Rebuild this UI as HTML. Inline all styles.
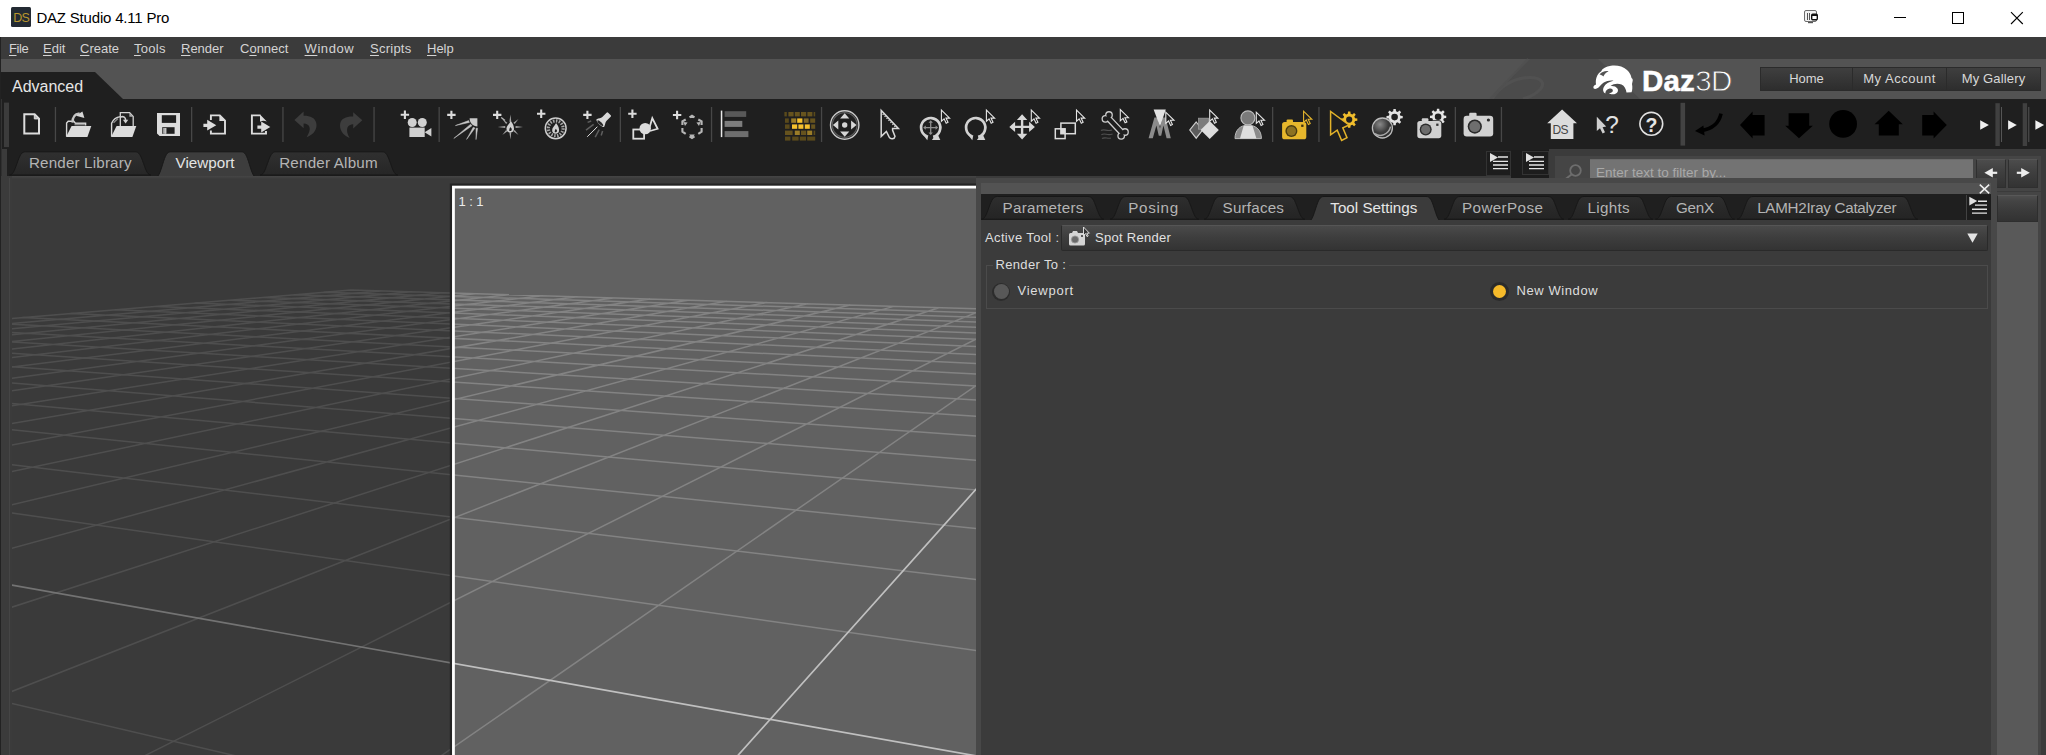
<!DOCTYPE html>
<html lang="en">
<head>
<meta charset="utf-8">
<title>DAZ Studio 4.11 Pro</title>
<style>
*{box-sizing:border-box;margin:0;padding:0}
html,body{width:2046px;height:755px;overflow:hidden;background:#3b3b3b}
body{position:relative;font-family:"Liberation Sans",Arial,sans-serif;font-size:13px;color:#d2d2d2;-webkit-font-smoothing:antialiased}
.abs{position:absolute}
svg{display:block;overflow:visible}
/* title bar */
#title{position:absolute;left:0;top:0;width:2046px;height:37px;background:#fff;color:#000}
#title .name{position:absolute;left:36.4px;top:8.5px;font-size:15px;line-height:18px;white-space:nowrap;letter-spacing:-0.19px}
#appicon{position:absolute;left:11px;top:7px;width:20px;height:20px;background:#232a33;border-radius:1.5px}
/* menu */
#menu{position:absolute;left:0;top:37px;width:2046px;height:22px;background:#3b3b3b}
#menu span{position:absolute;top:4px;font-size:13px;line-height:16px;color:#d4d4d4;white-space:nowrap}
#menu u{text-decoration:underline;text-underline-offset:1.5px;text-decoration-thickness:1px}
/* activity bar */
#act{position:absolute;left:0;top:59px;width:2046px;height:40px;background:#535353}
#advtab{position:absolute;left:1px;top:13px;width:122px;height:27px}
#advtab span{position:absolute;left:11px;top:6px;font-size:16px;line-height:18px;color:#e6e6e6}
.nav{position:absolute;top:8px;height:24px;border:1px solid #2b2b2b;background:linear-gradient(#3f3f3f,#2d2d2d);color:#d8d8d8;font-size:13px;line-height:21px;text-align:center}
/* toolbar */
#tb{position:absolute;left:0;top:99px;width:2046px;height:51px;background:#1f1f1f}
.sep{position:absolute;top:13px;width:1px;height:34px;background:#454545}
.ic{position:absolute}
/* tabs row */
#tabs{position:absolute;left:0;top:150px;width:2046px;height:26px;background:#1f1f1f}
.tab{position:absolute;height:22px}
.tab span{position:absolute;top:4px;font-size:15.2px;line-height:18px;white-space:nowrap;color:#b9b9b9}
/* viewport */
#vpwrap{position:absolute;left:0;top:176px;width:976px;height:579px;background:#3b3b3b}
#vp{position:absolute;left:12px;top:176px;width:964px;height:579px;background:#616161;overflow:hidden}
#vp .grid{position:absolute;left:0;top:0}
#dim{position:absolute;left:0;top:0;width:440px;height:579px;background:rgba(0,0,0,0.40)}
#dim2{position:absolute;left:440px;top:0;width:524px;height:9px;background:rgba(0,0,0,0.40)}
#vptop{position:absolute;left:0;top:0;width:964px;height:3px;background:linear-gradient(rgba(255,255,255,0.06),rgba(255,255,255,0))}
/* floating pane */
#pane{position:absolute;left:976px;top:178px;width:1021px;height:577px;background:#484848}
#pane .hdr{position:absolute;left:5px;top:4.7px;width:1010px;height:11.3px;background:#535353}
#pane .tabbar{position:absolute;left:5px;top:16px;width:1010px;height:26px;background:#1f1f1f}
#pane .body{position:absolute;left:5px;top:42px;width:1010px;height:535px;background:#3b3b3b}
.ptab{position:absolute;top:0;height:26px}
.ptab span{position:absolute;top:4.5px;font-size:15.2px;line-height:18px;white-space:nowrap;color:#b4b4b4}
</style>
</head>
<body>
<!-- ================= TITLE BAR ================= -->
<div id="title">
  <div id="appicon"><svg width="20" height="20" viewBox="0 0 20 20"><text x="2.2" y="14.6" font-family="Liberation Sans,Arial,sans-serif" font-size="12.5" fill="#b8952c" letter-spacing="-0.8">DS</text></svg></div>
  <div class="name">DAZ Studio 4.11 Pro</div>
  <svg class="abs" style="left:1800px;top:0" width="246" height="37" viewBox="1800 0 246 37">
  <rect x="1804.5" y="10.5" width="12" height="11" rx="1.5" fill="#f2f2f2" stroke="#6e6e6e" stroke-width="1"/>
  <path d="M1807.5 13V20M1809.5 13V20" stroke="#555" stroke-width="1"/>
  <rect x="1808" y="22" width="5" height="1.2" fill="#555"/>
  <rect x="1811.7" y="14.2" width="5.6" height="5.6" rx="1" fill="#fff" stroke="#111" stroke-width="1.4"/>
  <rect x="1812" y="14" width="5" height="2" fill="#111"/>
  <path d="M1894 17.5H1906" stroke="#000" stroke-width="1"/>
  <rect x="1952.5" y="12.5" width="11" height="11" fill="none" stroke="#000" stroke-width="1"/>
  <path d="M2011 12.2L2022.8 24M2022.8 12.2L2011 24" stroke="#000" stroke-width="1.1"/>
</svg>

</div>
<!-- ================= MENU BAR ================= -->
<div id="menu">
  <span style="left:9px;letter-spacing:-0.45px"><u>F</u>ile</span>
  <span style="left:43px"><u>E</u>dit</span>
  <span style="left:80px"><u>C</u>reate</span>
  <span style="left:134px;letter-spacing:0.3px"><u>T</u>ools</span>
  <span style="left:181px"><u>R</u>ender</span>
  <span style="left:240px">C<u>o</u>nnect</span>
  <span style="left:304.6px;letter-spacing:0.55px"><u>W</u>indow</span>
  <span style="left:370px;letter-spacing:0.25px"><u>S</u>cripts</span>
  <span style="left:427px"><u>H</u>elp</span>
</div>
<!-- ================= ACTIVITY BAR ================= -->
<div id="act">
  <svg id="advtab" viewBox="0 0 122 27"><path d="M0 0H94L122 27H0Z" fill="#1f1f1f"/></svg>
  <div id="advtab" style="background:none"><span>Advanced</span></div>
  <svg class="abs" style="left:1440px;top:0" width="320" height="40" viewBox="1440 59 320 40">
  <path d="M1530 59H1598L1640 99H1490Z" fill="#4b4b4b"/>
  <path d="M1492 99C1500 86 1514 77.5 1530 77.5C1541 77.5 1545.5 83 1540.5 89C1536.5 93.5 1530 97 1523 99" fill="none" stroke="#515151" stroke-width="3.2"/><path d="M1528 59L1490 99" stroke="#505050" stroke-width="2"/>
  <path d="M1596 84.5C1595.2 79 1597 74 1601 71.5C1602.5 68.5 1606 66.3 1611 65.8C1617 65 1623 66.5 1627 70C1629.5 72.3 1631 75 1631.5 78C1632.5 78.6 1633 79.6 1632.7 80.8L1632 84C1632.6 87 1632.4 90 1631.6 92.3L1626.5 92.6C1626 89 1624.5 86 1621.5 84.6C1618 83 1613.5 83.6 1610.6 86C1613.3 85.6 1616 86.4 1617.4 88.4C1618.6 90.2 1618 92.2 1616 93.4C1613.6 94.8 1610.6 94.6 1609 93.2C1610.8 93.2 1612.4 92.4 1612.8 91C1613.2 89.4 1611.6 88.2 1609.6 88.6C1606.8 89.2 1605 91.4 1605.4 93.6C1603 92.4 1602.4 89.6 1603.8 87C1605.4 84 1609 81.6 1613.6 80.8C1610.4 80.2 1606.6 80.8 1603.8 82.6C1601 84.4 1599.4 87.6 1596.8 88.6C1594.6 89.4 1593.2 88.6 1593.4 87C1593.6 85.8 1594.6 85 1596 84.5Z" fill="#fff"/>
  <path d="M1599.5 74.5C1601.5 72 1605 70.6 1608.6 71.2C1606 72.4 1604.2 74.2 1603.4 76.4C1602.4 75.4 1601 74.8 1599.5 74.5Z" fill="#535353"/>
  <text x="1642" y="90.6" font-family="Liberation Sans,Arial,sans-serif" font-size="29.5" font-weight="bold" fill="#fff" stroke="#fff" stroke-width="0.5" letter-spacing="0.1">Daz</text>
  <text x="1695.3" y="90.6" font-family="Liberation Sans,Arial,sans-serif" font-size="29.5" fill="#fff" letter-spacing="-0.6" stroke="#535353" stroke-width="0.8">3D</text>
</svg>

  <div class="nav" style="left:1760px;width:93px">Home</div>
  <div class="nav" style="left:1852px;width:95px;letter-spacing:0.55px">My Account</div>
  <div class="nav" style="left:1946px;width:95px;letter-spacing:0.15px">My Gallery</div>
</div>
<!-- ================= TOOLBAR ================= -->
<div id="tb">
<svg class="abs" style="left:0;top:0" width="2046" height="51" viewBox="0 99 2046 51" fill="none">
<rect x="0" y="99" width="2" height="51" fill="#333"/>
<rect x="4" y="102.6" width="5" height="44.5" fill="#3c3c3c"/>
<path d="M24.3 114.2H34.6L39 118.6V133.5H24.3Z" stroke="#dcdcdc" stroke-width="2" stroke-linejoin="miter"/><path d="M34.3 114.4V118.9H38.8Z" fill="#bdbdbd" stroke="#dcdcdc" stroke-width="1"/>
<rect x="54.8" y="107" width="1.3" height="35" fill="#474747"/>
<path d="M66.6 136.5V123L68.2 121.3H73.8L75.4 123.2H85.6V125.5" stroke="#d6d6d6" stroke-width="1.4"/><path d="M74.5 124.6H85.0" stroke="#8c8c8c" stroke-width="1.6"/><path d="M66.0 137L71.6 125.9H91.3L87.4 137Z" fill="#dcdcdc"/>
<path d="M72.7 122.6C72.3 117.4 75 114 79.6 113.4" stroke="#c4c4c4" stroke-width="2.3"/><path d="M82.4 111.6L84.4 118L76 115.8Z" fill="#d6d6d6"/>
<path d="M111.6 136.5V123.3C113.0 119.5 116.5 117.2 120.5 116.6" stroke="#d6d6d6" stroke-width="1.4"/><path d="M111.0 137L116.6 125.9H136.3L132.4 137Z" fill="#dcdcdc"/><path d="M120.3 126V112.6H129.6L133.2 116.5V126" stroke="#d2d2d2" stroke-width="1.3"/><path d="M129.4 112.8V116.8H133Z" fill="#aaa"/><path d="M120.6 117C123.5 116 125.6 117.5 125.6 120" stroke="#cfcfcf" stroke-width="1.6"/><path d="M122.9 119.8H128.3L125.6 123.6Z" fill="#cfcfcf"/><path d="M113.5 122.8L118 118.5" stroke="#8a8a8a" stroke-width="1.5"/>
<path d="M157 113.1H180V136.1H159.6L157 133.5Z" fill="#dcdcdc"/><rect x="161.8" y="115.2" width="14.3" height="7.7" fill="#1f1f1f"/><rect x="162.2" y="127.2" width="12.4" height="6.6" fill="#1f1f1f"/><rect x="162.8" y="128" width="3.8" height="5.8" fill="#9a9a9a"/><rect x="164.6" y="128" width="1.2" height="5.8" fill="#cfcfcf"/>
<rect x="191.0" y="107" width="1.3" height="35" fill="#474747"/>
<path d="M210.9 120V115.4H219.8L225 120.6V133.6H210.9V130.4" stroke="#dcdcdc" stroke-width="1.9"/><path d="M219.4 115V121H225.4Z" fill="#dcdcdc"/>
<path d="M203.4 123.7H207.2V119.8L216.3 125.3L207.2 130.6V127H203.4Z" fill="#dcdcdc"/>
<path d="M266 131V133.6H251.9V115.4H260.4" stroke="#dcdcdc" stroke-width="1.9"/><path d="M260 114.5L266.8 121.6C264 120.4 262 120.8 260 121.8Z" fill="#dcdcdc"/>
<path d="M257.4 125.5H261.2V121.6L270.3 127.1L261.2 132.4V128.8H257.4Z" fill="#dcdcdc"/>
<rect x="282.3" y="107" width="1.3" height="35" fill="#474747"/>
<path d="M303.6 111.4L294.4 119.9L303.6 128.2V123.6C309.5 123.6 312.4 128.6 306.6 137.2C314.4 134.4 317.6 128.6 316.2 122.8C314.8 117.6 310.2 115.6 303.6 115.7Z" fill="#3d3d3d"/>
<path d="M353.2 112.2L362.3 120.2L353.2 128.6V124.2C347.6 124.4 344.6 129 349.6 138C342.4 135 339.2 129 340.2 123.4C341.4 118.2 346.4 116.2 353.2 116.4Z" fill="#3d3d3d"/>
<rect x="373.4" y="107" width="1.3" height="35" fill="#474747"/>
<path d="M400.7 114.8H409.1M404.9 110.6V119.0" stroke="#dcdcdc" stroke-width="2.1"/>
<circle cx="412.2" cy="122.5" r="4.5" fill="#d0d0d0"/><circle cx="422.3" cy="122.5" r="4.5" fill="#d0d0d0"/><rect x="409.4" y="127.6" width="15.3" height="9.4" fill="#d0d0d0"/><path d="M424.6 132.3L431.4 127.9V136.6Z" fill="#d0d0d0"/>
<rect x="438.5" y="107" width="1.3" height="35" fill="#474747"/>
<path d="M447.2 114.9H455.6M451.4 110.7V119.1" stroke="#dcdcdc" stroke-width="2.1"/>
<path d="M477.4 118.2V126.4C472.8 126.4 469.6 122.8 469.6 118.2Z" fill="#c9c9c9"/>
<path d="M468.6 120.6L455.4 125.6L469.4 122.4ZM470.6 124.2L453.8 138.4L472 125.8ZM473.2 127.2L466.6 139.4L475 128ZM476 128.2L476 139.6L477.6 128.2Z" fill="#c6c6c6" stroke="#c6c6c6" stroke-width="0.5"/>
<path d="M493.0 114.9H501.4M497.2 110.7V119.1" stroke="#dcdcdc" stroke-width="2.1"/>
<path d="M509.4 132.2L511.3 132.2L510.4 139.6ZM506.1 130.0L507.4 131.3L502.3 135.1ZM505.2 126.0L505.2 128.0L497.8 127.0ZM507.4 122.7L506.1 124.0L502.3 118.9ZM511.3 121.8L509.4 121.8L510.4 114.4ZM514.7 124.0L513.4 122.7L518.5 118.9ZM515.6 128.0L515.6 126.0L523.0 127.0ZM513.4 131.3L514.7 130.0L518.5 135.1Z" fill="#a4a4a4"/>
<path d="M505 120.6L501.2 117.4" stroke="#b8b8b8" stroke-width="1.3"/>
<path transform="translate(510.2 126.8) scale(1.25)" d="M0.4 -4.6C2.6 -2 3.2 0.4 3 2.2C2.8 3.8 1.6 4.6 0 4.6C-1.8 4.6 -3 3.4 -3 1.6C-3 -0.6 -0.8 -2 0.4 -4.6ZM0.2 0.2C-0.6 1.4 -1 2.4 -0.6 3.4C0.6 3.6 1.4 2.8 1.2 1.8C1 1 0.4 0.8 0.2 0.2Z" fill="#d0d0d0" fill-rule="evenodd"/>
<path d="M537.0 113.8H545.4M541.2 109.6V118.0" stroke="#dcdcdc" stroke-width="2.1"/>
<circle cx="555.7" cy="128.3" r="10.4" stroke="#cdcdcd" stroke-width="1.5"/><circle cx="555.7" cy="128.3" r="7.4" stroke="#a6a6a6" stroke-width="3.2" stroke-dasharray="1.5 1.406"/>
<path transform="translate(555.6 128.4) scale(1.15)" d="M0.4 -4.6C2.6 -2 3.2 0.4 3 2.2C2.8 3.8 1.6 4.6 0 4.6C-1.8 4.6 -3 3.4 -3 1.6C-3 -0.6 -0.8 -2 0.4 -4.6ZM0.2 0.2C-0.6 1.4 -1 2.4 -0.6 3.4C0.6 3.6 1.4 2.8 1.2 1.8C1 1 0.4 0.8 0.2 0.2Z" fill="#d0d0d0" fill-rule="evenodd"/>
<path d="M583.2 114.9H591.6M587.4 110.7V119.1" stroke="#dcdcdc" stroke-width="2.1"/>
<g transform="translate(600.4 123) rotate(-45)"><path d="M0 -5.4C2.6 -4.6 3.6 -2.9 5.6 -2.9L11.6 -2.9Q12.8 -2.9 12.8 -1.8L12.8 1.8Q12.8 2.9 11.6 2.9L5.6 2.9C3.6 2.9 2.6 4.6 0 5.4C-2.2 5.4 -2.2 -5.4 0 -5.4Z" fill="#d8d8d8"/><ellipse cx="-0.2" cy="0" rx="1.25" ry="3.9" fill="#262626"/></g>
<path d="M597.2 126.8L587.4 136.6L596 128.2Z" fill="#d4d4d4" stroke="#d4d4d4" stroke-width="0.9"/>
<path d="M593.6 124.4L586 130.2M599.2 129.6L595.2 137.2M602.6 131L601.2 135.4M591.2 121L587.6 122.4" stroke="#5e5e5e" stroke-width="1.5"/>
<rect x="619.7" y="107" width="1.3" height="35" fill="#474747"/>
<path d="M628.2 113.7H636.6M632.4 109.5V117.9" stroke="#dcdcdc" stroke-width="2.1"/>
<rect x="633.3" y="129.5" width="10.8" height="9.2" stroke="#dcdcdc" stroke-width="1.8"/><path d="M648.6 130.4L652.3 118.2L657.6 128.8L650 131" stroke="#dcdcdc" stroke-width="1.8"/><circle cx="645.2" cy="128.6" r="5.7" fill="#dcdcdc"/>
<path d="M672.9 115.0H681.3M677.1 110.8V119.2" stroke="#dcdcdc" stroke-width="2.1"/>
<path d="M689.5 117.3L692.0 115.8L694.5 117.3M698.3 119.5L701.6 121.4L701.6 124.9M701.6 128.1L701.6 131.6L698.3 133.8M694.5 136.3L692.0 138.0L689.5 136.3M685.7 133.8L682.4 131.6L682.4 128.1M682.4 124.9L682.4 121.4L685.7 119.5" stroke="#b6b6b6" stroke-width="2.1" stroke-linejoin="miter"/>
<path d="M692 138.6L689.2 134.6H694.8ZM683.4 122L687.6 122.6L685 126ZM700.6 122L696.4 122.6L699 126Z" fill="#b6b6b6"/>
<rect x="710.9" y="107" width="1.3" height="35" fill="#474747"/>
<rect x="720.8" y="110.6" width="1.5" height="26.5" fill="#e8e8e8"/><rect x="724.6" y="111.2" width="21.6" height="5.7" fill="#595959"/><rect x="724.6" y="120.9" width="17.7" height="6" fill="#7d7d7d"/><rect x="724.6" y="131.1" width="23.8" height="6" fill="#6e6e6e"/>
<rect x="784.4" y="112.0" width="2.4" height="4.4" fill="#5a4a1b"/><rect x="788.4" y="112.0" width="5.2" height="4.4" fill="#66531e"/><rect x="794.8" y="112.0" width="5.0" height="4.4" fill="#66531e"/><rect x="801.0" y="112.0" width="5.2" height="4.4" fill="#66531e"/><rect x="807.4" y="112.0" width="5.0" height="4.4" fill="#66531e"/><rect x="813.6" y="112.0" width="1.6" height="4.4" fill="#5a4a1b"/><rect x="785.0" y="118.4" width="3.8" height="4.4" fill="#5a4a1b"/><rect x="791.2" y="118.4" width="5.0" height="4.4" fill="#9a7c28"/><rect x="797.2" y="118.4" width="5.2" height="4.4" fill="#f6c12d"/><rect x="803.8" y="118.4" width="4.8" height="4.4" fill="#806827"/><rect x="810.2" y="118.4" width="5.0" height="4.4" fill="#66531e"/><rect x="785.0" y="124.4" width="4.6" height="4.4" fill="#5a4a1b"/><rect x="792.0" y="124.4" width="5.2" height="4.4" fill="#f6c12d"/><rect x="798.4" y="124.4" width="5.0" height="4.4" fill="#f6c12d"/><rect x="804.8" y="124.4" width="5.0" height="4.4" fill="#f6c12d"/><rect x="811.2" y="124.4" width="4.0" height="4.4" fill="#66531e"/><rect x="785.0" y="130.6" width="7.6" height="4.4" fill="#66531e"/><rect x="794.8" y="130.6" width="5.0" height="4.4" fill="#9a7c28"/><rect x="801.0" y="130.6" width="5.2" height="4.4" fill="#66531e"/><rect x="807.2" y="130.6" width="5.0" height="4.4" fill="#9a7c28"/><rect x="813.6" y="130.6" width="1.6" height="4.4" fill="#5a4a1b"/><rect x="785.0" y="136.6" width="5.4" height="4.0" fill="#5a4a1b"/><rect x="792.2" y="136.6" width="6.4" height="4.0" fill="#5a4a1b"/><rect x="799.8" y="136.6" width="6.2" height="4.0" fill="#5a4a1b"/><rect x="807.2" y="136.6" width="8.0" height="4.0" fill="#5a4a1b"/>
<rect x="820.9" y="107" width="1.3" height="35" fill="#474747"/>
<circle cx="844.7" cy="125.0" r="14.2" stroke="#c8c8c8" stroke-width="1.4"/><circle cx="844.7" cy="125.0" r="12.4" stroke="#5a5a5a" stroke-width="1.2"/>
<path d="M844.7 113.2l-4.6 5.4h9.2ZM844.7 136.8l-4.6 -5.4h9.2ZM832.9 125.0l5.4 -4.6v9.2ZM856.5 125.0l-5.4 -4.6v9.2Z" fill="#d6d6d6"/><circle cx="844.7" cy="125.0" r="2.7" fill="#d6d6d6"/>
<path d="M881.2 110.4V136.4L886.4 131.4L889.2 137.2C890.6 139.6 894.6 139.2 895 136.4L892.6 130.4V128.6H898.4Z" stroke="#d8d8d8" stroke-width="1.5" stroke-linejoin="miter"/>
<path d="M882.6 113.8L895.4 127" stroke="#d8d8d8" stroke-width="1.2" stroke-dasharray="1.4 1.4"/>
<path d="M926.64 136.30A9.60 9.60 0 1 1 933.18 136.87" stroke="#d2d2d2" stroke-width="2.7"/><path d="M931.9 140.0L940.3 140.0L937.1 133.0Z" fill="#d2d2d2"/><path d="M923.1 134.8L927.3 140.2L928.3 135.2Z" fill="#d2d2d2"/>
<path d="M924.6 127.6H936.8M930.7 121.6V133.6" stroke="#8e8e8e" stroke-width="1.3"/><path d="M923.2 127.6l2.6 -2.2v4.4ZM938.2 127.6l-2.6 -2.2v4.4ZM930.7 120.2l-2.2 2.6h4.4ZM930.7 135l-2.2 -2.6h4.4Z" fill="#8e8e8e"/>
<path transform="translate(941.4 110.0) scale(1.00)" d="M0 0V11.2L2.7 8.8L4.8 13.2L6.6 12.3L4.6 8.1H8.2Z" fill="#1f1f1f" stroke="#e6e6e6" stroke-width="1.1" stroke-linejoin="miter"/>
<path d="M971.64 136.30A9.60 9.60 0 1 1 978.18 136.87" stroke="#d2d2d2" stroke-width="2.7"/><path d="M976.9 140.0L985.3 140.0L982.1 133.0Z" fill="#d2d2d2"/><path d="M968.1 134.8L972.3 140.2L973.3 135.2Z" fill="#d2d2d2"/>
<path transform="translate(986.4 110.0) scale(1.00)" d="M0 0V11.2L2.7 8.8L4.8 13.2L6.6 12.3L4.6 8.1H8.2Z" fill="#1f1f1f" stroke="#e6e6e6" stroke-width="1.1" stroke-linejoin="miter"/>
<path d="M1013.1 126.9H1031.1M1022.1 117.9V135.9" stroke="#d8d8d8" stroke-width="2.4"/>
<path d="M1009.3 126.9l5.8 -5.2v10.4ZM1034.9 126.9l-5.8 -5.2v10.4ZM1022.1 114.3l-5.2 5.8h10.4ZM1022.1 139.5l-5.2 -5.8h10.4Z" fill="#d8d8d8"/>
<path transform="translate(1031.3 110.0) scale(1.00)" d="M0 0V11.2L2.7 8.8L4.8 13.2L6.6 12.3L4.6 8.1H8.2Z" fill="#1f1f1f" stroke="#e6e6e6" stroke-width="1.1" stroke-linejoin="miter"/>
<rect x="1060.9" y="123.1" width="14.4" height="10.6" stroke="#dcdcdc" stroke-width="1.5"/><rect x="1055.3" y="128.8" width="9.8" height="9.8" stroke="#dcdcdc" stroke-width="1.5"/><rect x="1060.9" y="128.8" width="4.4" height="4.9" fill="#dcdcdc"/>
<path transform="translate(1076.5 110.0) scale(1.00)" d="M0 0V11.2L2.7 8.8L4.8 13.2L6.6 12.3L4.6 8.1H8.2Z" fill="#1f1f1f" stroke="#e6e6e6" stroke-width="1.1" stroke-linejoin="miter"/>
<path d="M1108.6 118.4L1121.8 132.4" stroke="#cdcdcd" stroke-width="6.6" stroke-linecap="round"/><circle cx="1105.4" cy="118.8" r="3.9" fill="#cdcdcd"/><circle cx="1109.0" cy="115.0" r="3.9" fill="#cdcdcd"/><circle cx="1121.2" cy="135.8" r="3.9" fill="#cdcdcd"/><circle cx="1125.0" cy="132.0" r="3.9" fill="#cdcdcd"/>
<path d="M1108.6 118.4L1121.8 132.4" stroke="#1f1f1f" stroke-width="4" stroke-linecap="round"/><circle cx="1105.4" cy="118.8" r="2.6" fill="#1f1f1f"/><circle cx="1109.0" cy="115.0" r="2.6" fill="#1f1f1f"/><circle cx="1121.2" cy="135.8" r="2.6" fill="#1f1f1f"/><circle cx="1125.0" cy="132.0" r="2.6" fill="#1f1f1f"/>
<path d="M1101 130.6C1104.4 128 1106.4 132 1112 130M1101.4 134.8C1104.8 132.4 1107 136 1112.6 134M1102 138.6C1105.2 136.4 1107.4 139.2 1111 138" stroke="#505050" stroke-width="1.2"/>
<path transform="translate(1120.3 109.6) scale(1.00)" d="M0 0V11.2L2.7 8.8L4.8 13.2L6.6 12.3L4.6 8.1H8.2Z" fill="#1f1f1f" stroke="#e6e6e6" stroke-width="1.1" stroke-linejoin="miter"/>
<path d="M1148.6 138.2L1154.4 117.6H1157.6L1160 128.6L1162.4 117.6H1165.6L1170.8 138.2H1166.6L1163.4 125.6L1161.2 135.8H1158.8L1156.4 125.6L1152.8 138.2Z" fill="#8c8c8c"/><path d="M1153.6 109.6H1165.8L1160 126.4Z" fill="#e2e2e2"/>
<path transform="translate(1165.8 112.2) scale(1.00)" d="M0 0V11.2L2.7 8.8L4.8 13.2L6.6 12.3L4.6 8.1H8.2Z" fill="#1f1f1f" stroke="#e6e6e6" stroke-width="1.1" stroke-linejoin="miter"/>
<path d="M1196.2 122L1202.6 130L1196.2 138.2L1189.8 130Z" fill="#5c5c5c" stroke="#cfcfcf" stroke-width="1.2"/><rect x="1198.6" y="118.2" width="10" height="11" fill="#7c7c7c" stroke="#9a9a9a" stroke-width="0.8"/><path d="M1209.7 121L1218.8 130L1209.7 139L1200.6 130Z" fill="#dcdcdc"/>
<path transform="translate(1209.7 110.0) scale(1.00)" d="M0 0V11.2L2.7 8.8L4.8 13.2L6.6 12.3L4.6 8.1H8.2Z" fill="#1f1f1f" stroke="#e6e6e6" stroke-width="1.1" stroke-linejoin="miter"/>
<path d="M1235 138.6C1235 130.6 1239.6 125.2 1248 125.2C1256.6 125.2 1261.4 130.6 1261.4 138.6Z" fill="#8a8a8a" stroke="#bdbdbd" stroke-width="1"/><path d="M1243.6 126L1252.6 126L1256.4 138.4H1240Z" fill="#dedede"/><circle cx="1247.9" cy="117.9" r="7" fill="#7a7a7a" stroke="#bdbdbd" stroke-width="1.1"/>
<path transform="translate(1256.3 112.2) scale(1.00)" d="M0 0V11.2L2.7 8.8L4.8 13.2L6.6 12.3L4.6 8.1H8.2Z" fill="#1f1f1f" stroke="#e6e6e6" stroke-width="1.1" stroke-linejoin="miter"/>
<rect x="1272.0" y="107" width="1.3" height="35" fill="#474747"/>
<rect x="1282.1" y="121.9" width="24.2" height="17.4" rx="2.6" fill="#e7b72c"/><rect x="1286.6" y="119.4" width="6.4" height="4" rx="1" fill="#e7b72c"/><circle cx="1291.4" cy="131.1" r="6" fill="#4a3c10"/><circle cx="1291.4" cy="131.1" r="4.6" fill="#8c7122"/><rect x="1301.2" y="124.6" width="2.3" height="2.3" fill="#3a3010"/>
<path transform="translate(1303.6 111.2) scale(1.00)" d="M0 0V11.2L2.7 8.8L4.8 13.2L6.6 12.3L4.6 8.1H8.2Z" fill="#1f1f1f" stroke="#e7b72c" stroke-width="1.1" stroke-linejoin="miter"/>
<rect x="1318.3" y="107" width="1.3" height="35" fill="#474747"/>
<path d="M1355.03 118.20L1357.32 118.44L1357.32 120.76L1355.03 121.00L1354.32 122.73L1355.76 124.52L1354.12 126.16L1352.33 124.72L1350.60 125.43L1350.36 127.72L1348.04 127.72L1347.80 125.43L1346.07 124.72L1344.28 126.16L1342.64 124.52L1344.08 122.73L1343.37 121.00L1341.08 120.76L1341.08 118.44L1343.37 118.20L1344.08 116.47L1342.64 114.68L1344.28 113.04L1346.07 114.48L1347.80 113.77L1348.04 111.48L1350.36 111.48L1350.60 113.77L1352.33 114.48L1354.12 113.04L1355.76 114.68L1354.32 116.47ZM1346.10 119.60A3.10 3.10 0 1 0 1352.30 119.60A3.10 3.10 0 1 0 1346.10 119.60Z" fill="#f0bd2c" fill-rule="evenodd"/>
<path d="M1330.6 111.4V134.8L1337.2 130.2L1341.6 140.4L1347 137.6L1342.8 127.8L1349 125Z" stroke="#e2b22a" stroke-width="1.5" fill="#1f1f1f" stroke-linejoin="miter"/>
<path d="M1400.43 115.70L1402.72 115.94L1402.72 118.26L1400.43 118.50L1399.72 120.23L1401.16 122.02L1399.52 123.66L1397.73 122.22L1396.00 122.93L1395.76 125.22L1393.44 125.22L1393.20 122.93L1391.47 122.22L1389.68 123.66L1388.04 122.02L1389.48 120.23L1388.77 118.50L1386.48 118.26L1386.48 115.94L1388.77 115.70L1389.48 113.97L1388.04 112.18L1389.68 110.54L1391.47 111.98L1393.20 111.27L1393.44 108.98L1395.76 108.98L1396.00 111.27L1397.73 111.98L1399.52 110.54L1401.16 112.18L1399.72 113.97ZM1391.30 117.10A3.30 3.30 0 1 0 1397.90 117.10A3.30 3.30 0 1 0 1391.30 117.10Z" fill="#e2e2e2" fill-rule="evenodd"/>
<defs><radialGradient id="ball" cx="0.38" cy="0.32" r="0.75"><stop offset="0" stop-color="#8a8a8a"/><stop offset="0.55" stop-color="#3c3c3c"/><stop offset="1" stop-color="#2a2a2a"/></radialGradient></defs>
<circle cx="1382.4" cy="128" r="10" fill="url(#ball)" stroke="#bdbdbd" stroke-width="1.3"/><path d="M1375 133.6C1380 137.6 1388.6 134.6 1390.6 126.6" stroke="#a8a8a8" stroke-width="1.5"/>
<path d="M1443.93 115.40L1446.22 115.64L1446.22 117.96L1443.93 118.20L1443.22 119.93L1444.66 121.72L1443.02 123.36L1441.23 121.92L1439.50 122.63L1439.26 124.92L1436.94 124.92L1436.70 122.63L1434.97 121.92L1433.18 123.36L1431.54 121.72L1432.98 119.93L1432.27 118.20L1429.98 117.96L1429.98 115.64L1432.27 115.40L1432.98 113.67L1431.54 111.88L1433.18 110.24L1434.97 111.68L1436.70 110.97L1436.94 108.68L1439.26 108.68L1439.50 110.97L1441.23 111.68L1443.02 110.24L1444.66 111.88L1443.22 113.67ZM1434.80 116.80A3.30 3.30 0 1 0 1441.40 116.80A3.30 3.30 0 1 0 1434.80 116.80Z" fill="#e4e4e4" fill-rule="evenodd"/>
<rect x="1416.6" y="120.2" width="25.4" height="18.6" rx="3" fill="#1f1f1f"/><rect x="1417.3" y="120.9" width="24" height="17.3" rx="2.6" fill="#d0d0d0"/><rect x="1421.8" y="118.2" width="6.6" height="4" rx="1" fill="#d0d0d0"/><circle cx="1425.7" cy="129.6" r="6" fill="#2c2c2c"/><circle cx="1425.7" cy="129.6" r="4.6" fill="#6c6c6c"/><rect x="1436.2" y="123.6" width="2.3" height="2.3" fill="#333"/>
<rect x="1454.7" y="107" width="1.3" height="35" fill="#474747"/>
<rect x="1463.6" y="115.7" width="29.6" height="20.8" rx="3.2" fill="#d2d2d2"/><rect x="1469.2" y="112.8" width="7.4" height="4.4" rx="1.2" fill="#d2d2d2"/><circle cx="1474.8" cy="126.6" r="7.1" fill="#2a2a2a"/><circle cx="1474.8" cy="126.6" r="5.5" fill="#6e6e6e"/><circle cx="1488.4" cy="120" r="1.6" fill="#2a2a2a"/>
<rect x="1500.8" y="107" width="1.3" height="35" fill="#474747"/>
<path d="M1562.1 109.6L1577 123.2H1573.4V138.9H1550.8V123.2H1547.2Z" fill="#dcdcdc"/>
<text x="1552.4" y="133.8" font-family="Liberation Sans,Arial,sans-serif" font-size="12" fill="#454545" letter-spacing="-0.6">DS</text>
<path d="M1596.8 116.8V131L1600 128.2L1602.6 133.4L1605 132.2L1602.6 127.2L1606.2 126.6Z" fill="#cfcfcf"/>
<text x="1605.2" y="133.2" font-family="Liberation Sans,Arial,sans-serif" font-size="24.5" fill="#e2e2e2">?</text>
<circle cx="1651.3" cy="123.8" r="11.4" stroke="#e2e2e2" stroke-width="1.6"/><text x="1645.4" y="131.9" font-family="Liberation Sans,Arial,sans-serif" font-size="19.5" font-weight="bold" fill="#e6e6e6">?</text>
<rect x="1680.5" y="102.8" width="4.6" height="42.8" fill="#434343"/>
<path d="M1721 113.6C1719 123 1712 129 1701 130.6" stroke="#000" stroke-width="3.6"/><path d="M1695 131L1703.4 125.4L1704.6 135.4Z" fill="#000"/>
<path d="M1740 125L1752.6 111.4V115H1764.6V135.4H1752.6V138.6Z" fill="#000"/>
<path d="M1788.6 113.2H1809.2V125.8H1812.8L1799 138.2L1785.2 125.8H1788.6Z" fill="#000"/>
<circle cx="1843.1" cy="123.9" r="13.9" fill="#000"/>
<path d="M1888.7 110.8L1902.8 124.2H1898.8V135.4H1878.8V124.2H1874.6Z" fill="#000"/>
<path d="M1922.2 115H1933.6V111.4L1946.8 125L1933.6 138.6V135.4H1922.2Z" fill="#000"/>
<path d="M1980.2 120.3L1988.9 125L1980.2 129.8Z" fill="#f0f0f0"/>
<path d="M2008.1 120.3L2016.8 125L2008.1 129.8Z" fill="#f0f0f0"/>
<path d="M2035.4 120.3L2044.1 125L2035.4 129.8Z" fill="#f0f0f0"/>
<rect x="1995.4" y="103.2" width="4.4" height="42.8" fill="#404040"/><rect x="2001.0" y="107" width="1" height="35" fill="#555"/>
<rect x="2022.7" y="103.2" width="4.4" height="42.8" fill="#404040"/><rect x="2028.3" y="107" width="1" height="35" fill="#555"/>
</svg>
</div>
<!-- ================= TABS ROW ================= -->
<div id="tabs">
<div class="abs" style="left:0;top:-1px;width:7px;height:28px;background:#3b3b3b"></div>
<div class="abs" style="left:0;top:-1px;width:1.5px;height:28px;background:#303030"></div>
<svg class="abs" style="left:0;top:0" width="2046" height="27" viewBox="0 0 2046 27"><defs><linearGradient id="tg" x1="0" y1="0" x2="0" y2="1"><stop offset="0" stop-color="#303030"/><stop offset="1" stop-color="#262626"/></linearGradient></defs><path d="M9.5 25.0 C12.5 25.0 14.0 22.0 17.0 13.4 S21.5 1.8 25.5 1.8 H135.0 C139.0 1.8 140.5 4.8 143.5 13.4 S148.0 25.0 151.0 25.0 Z" fill="url(#tg)" stroke="#171717" stroke-width="1"/><path d="M155.0 27.5 C158.0 27.5 159.5 24.5 162.5 14.7 S167.0 1.8 171.0 1.8 H241.0 C245.0 1.8 246.5 4.8 249.5 14.7 S254.0 27.5 257.0 27.5 Z" fill="#3d3d3d" stroke="#181818" stroke-width="1"/><path d="M260.0 25.0 C263.0 25.0 264.5 22.0 267.5 13.4 S272.0 1.8 276.0 1.8 H382.0 C386.0 1.8 387.5 4.8 390.5 13.4 S395.0 25.0 398.0 25.0 Z" fill="url(#tg)" stroke="#171717" stroke-width="1"/></svg><div class="tab" style="left:28.9px;top:0"><span style="color:#b4b4b4;letter-spacing:0.17px">Render Library</span></div><div class="tab" style="left:175.6px;top:0"><span style="color:#e4e4e4;letter-spacing:0.00px">Viewport</span></div><div class="tab" style="left:279.2px;top:0"><span style="color:#b4b4b4;letter-spacing:0.20px">Render Album</span></div>
<div class="abs" style="left:1511px;top:0;width:38px;height:28px;background:#1c1c1c"></div>
<div class="abs" style="left:1486px;top:0.5px;width:25px;height:25.5px;background:#1d1d1d;border:1px solid #333"></div>
<div class="abs" style="left:1522px;top:0.5px;width:26.5px;height:24px;background:#1d1d1d;border:1px solid #333"></div>
<svg class="abs" style="left:1489px;top:2px" width="22" height="20" viewBox="0 0 22 20"><path d="M1 1L9 5.5L1 10Z" fill="#e0e0e0"/><path d="M9 5H19M4 9.3H19M4 13H19M4 16.7H19" stroke="#e4e4e4" stroke-width="1.3"/></svg>
<svg class="abs" style="left:1525px;top:2px" width="22" height="20" viewBox="0 0 22 20"><path d="M1 1L9 5.5L1 10Z" fill="#e0e0e0"/><path d="M9 5H19M4 9.3H19M4 13H19M4 16.7H19" stroke="#e4e4e4" stroke-width="1.3"/></svg>

</div>
<!-- ================= VIEWPORT ================= -->
<div id="vpwrap"><div class="abs" style="left:9px;top:2px;width:1px;height:577px;background:#454545"></div></div>
<div id="vp">
<svg class="grid" width="964" height="580" viewBox="0 0 964 580"><path d="M241.4 584.0L-2.0 527.0M966.0 474.7L-2.0 336.8M423.0 584.0L966.0 208.3M966.0 403.7L-2.0 288.4M124.2 584.0L966.0 162.2M966.0 352.7L-2.0 253.6M-2.0 516.2L966.0 136.0M966.0 314.3L-2.0 227.4M-2.0 431.8L926.9 131.7M966.0 284.3L-2.0 206.9M-2.0 372.8L881.9 130.4M966.0 260.2L-2.0 190.5M-2.0 329.3L838.2 129.1M966.0 240.5L-2.0 177.1M-2.0 295.9L795.9 127.8M966.0 224.0L-2.0 165.8M-2.0 269.4L754.7 126.5M966.0 210.1L-2.0 156.3M-2.0 247.9L714.7 125.3M966.0 198.1L-2.0 148.1M-2.0 230.1L675.8 124.2M966.0 187.7L10.3 141.6M-2.0 215.1L638.0 123.0M966.0 178.6L58.6 137.6M-2.0 202.4L601.2 121.9M966.0 170.5L103.2 133.8M-2.0 191.3L565.3 120.8M966.0 163.4L144.5 130.4M-2.0 181.7L530.5 119.8M966.0 157.0L182.7 127.1M-2.0 173.2L496.5 118.8M966.0 151.2L218.4 124.2M-2.0 165.7L463.4 117.8M966.0 146.0L251.6 121.4M-2.0 159.0L431.2 116.8M966.0 141.2L282.7 118.7M-2.0 153.0L399.7 115.8M966.0 136.9L311.8 116.3M-2.0 147.6L369.1 114.9M966.0 132.9L339.1 114.0M-2.0 142.7L339.1 114.0" stroke="#838383" stroke-width="1.5" fill="none"/><path d="M966.0 580.2L-2.0 408.8M721.8 584.0L966.0 311.1" stroke="#c0c0c0" stroke-width="1.7" fill="none"/></svg>
<div id="dim"></div><div id="dim2"></div><div id="vptop"></div>
<svg class="abs" style="left:0;top:0" width="964" height="579" viewBox="12 176 964 579"><path d="M451 760V184.6H980" fill="none" stroke="#232323" stroke-width="2.4"/><path d="M453.45 760V187.15H980" fill="none" stroke="#fff" stroke-width="2.8"/></svg>
<div class="abs" style="left:446.5px;top:18.5px;font-size:13px;line-height:14px;color:#ececec;white-space:nowrap;letter-spacing:-0.1px">1 : 1</div>

</div>
<div class="abs" style="left:0;top:37px;width:1px;height:718px;background:#222;z-index:5"></div>
<!-- ================= RIGHT COLUMN ================= -->
<div class="abs" style="left:1549px;top:149px;width:497px;height:46px;background:#3b3b3b"></div>
<div class="abs" style="left:1555px;top:156px;width:486px;height:35px;background:#454545"></div>
<div class="abs" style="left:1590px;top:159px;width:383px;height:29px;background:#737373;border-top:1px solid #6a6a6a"></div>
<div class="abs" style="left:1596px;top:165px;font-size:13.5px;line-height:16px;color:#a9a9a9;white-space:nowrap">Enter text to filter by...</div>
<svg class="abs" style="left:1563px;top:163px" width="22" height="18" viewBox="0 0 22 18"><circle cx="12.5" cy="7.5" r="5.3" fill="none" stroke="#6d6d6d" stroke-width="1.8"/><path d="M8.5 11.5L2 16.5" stroke="#6d6d6d" stroke-width="2"/></svg>
<div class="abs" style="left:1976px;top:158.6px;width:30px;height:29.4px;background:linear-gradient(#4c4c4c,#404040 40%,#333);border:1px solid #2f2f2f;border-top-color:#555"></div>
<div class="abs" style="left:2008.3px;top:158.6px;width:30px;height:29.4px;background:linear-gradient(#4c4c4c,#404040 40%,#333);border:1px solid #2f2f2f;border-top-color:#555"></div>
<svg class="abs" style="left:1982px;top:166px" width="18" height="14" viewBox="0 0 18 14"><path d="M2.4 6.8L10.8 2V11.6Z" fill="#ededed"/><path d="M10 6.8H15.2" stroke="#ededed" stroke-width="2.2"/></svg>
<svg class="abs" style="left:2014px;top:166px" width="18" height="14" viewBox="0 0 18 14"><path d="M15.8 6.8L7.2 2V11.6Z" fill="#ededed"/><path d="M2.8 6.8H8" stroke="#ededed" stroke-width="2.2"/></svg>
<div class="abs" style="left:1996px;top:192px;width:45px;height:563px;background:#454545"></div>
<div class="abs" style="left:1997px;top:195px;width:41px;height:560px;background:#595959"></div>
<div class="abs" style="left:1997px;top:195px;width:41px;height:26.5px;background:linear-gradient(#4e4e4e,#444 20%,#3a3a3a 60%,#323232);border:1px solid #2e2e2e;border-top-color:#585858"></div>
<div class="abs" style="left:2041px;top:149px;width:5px;height:606px;background:#3b3b3b"></div>

<!-- ================= FLOATING PANE ================= -->
<div id="pane">
<div class="hdr"></div>
<svg class="abs" style="left:1003px;top:5.5px" width="11" height="10" viewBox="0 0 11 10"><path d="M0.8 0.6L10.2 9.4M10.2 0.6L0.8 9.4" stroke="#f0f0f0" stroke-width="1.5"/></svg>
<div class="tabbar">
<svg class="abs" style="left:0;top:0" width="1010" height="27" viewBox="0 0 1010 27"><defs><linearGradient id="tg2" x1="0" y1="0" x2="0" y2="1"><stop offset="0" stop-color="#2e2e2e"/><stop offset="1" stop-color="#242424"/></linearGradient></defs><path d="M0.3 25.2 C3.3 25.2 4.8 22.2 7.8 13.8 S12.3 2.5 16.3 2.5 H107.0 C111.0 2.5 112.5 5.5 115.5 13.8 S120.0 25.2 123.0 25.2 Z" fill="url(#tg2)" stroke="#171717" stroke-width="1"/><path d="M129.0 25.2 C132.0 25.2 133.5 22.2 136.5 13.8 S141.0 2.5 145.0 2.5 H202.0 C206.0 2.5 207.5 5.5 210.5 13.8 S215.0 25.2 218.0 25.2 Z" fill="url(#tg2)" stroke="#171717" stroke-width="1"/><path d="M223.0 25.2 C226.0 25.2 227.5 22.2 230.5 13.8 S235.0 2.5 239.0 2.5 H308.0 C312.0 2.5 313.5 5.5 316.5 13.8 S321.0 25.2 324.0 25.2 Z" fill="url(#tg2)" stroke="#171717" stroke-width="1"/><path d="M327.0 27.5 C330.0 27.5 331.5 24.5 334.5 15.0 S339.0 2.5 343.0 2.5 H445.0 C449.0 2.5 450.5 5.5 453.5 15.0 S458.0 27.5 461.0 27.5 Z" fill="#3b3b3b" stroke="#181818" stroke-width="1"/><path d="M463.0 25.2 C466.0 25.2 467.5 22.2 470.5 13.8 S475.0 2.5 479.0 2.5 H567.0 C571.0 2.5 572.5 5.5 575.5 13.8 S580.0 25.2 583.0 25.2 Z" fill="url(#tg2)" stroke="#171717" stroke-width="1"/><path d="M587.0 25.2 C590.0 25.2 591.5 22.2 594.5 13.8 S599.0 2.5 603.0 2.5 H656.0 C660.0 2.5 661.5 5.5 664.5 13.8 S669.0 25.2 672.0 25.2 Z" fill="url(#tg2)" stroke="#171717" stroke-width="1"/><path d="M674.5 25.2 C677.5 25.2 679.0 22.2 682.0 13.8 S686.5 2.5 690.5 2.5 H737.5 C741.5 2.5 743.0 5.5 746.0 13.8 S750.5 25.2 753.5 25.2 Z" fill="url(#tg2)" stroke="#171717" stroke-width="1"/><path d="M756.0 25.2 C759.0 25.2 760.5 22.2 763.5 13.8 S768.0 2.5 772.0 2.5 H921.0 C925.0 2.5 926.5 5.5 929.5 13.8 S934.0 25.2 937.0 25.2 Z" fill="url(#tg2)" stroke="#171717" stroke-width="1"/></svg><div class="ptab" style="left:21.6px"><span style="color:#b4b4b4;letter-spacing:0.25px">Parameters</span></div><div class="ptab" style="left:147.2px"><span style="color:#b4b4b4;letter-spacing:0.70px">Posing</span></div><div class="ptab" style="left:241.6px"><span style="color:#b4b4b4;letter-spacing:0.20px">Surfaces</span></div><div class="ptab" style="left:349.3px"><span style="color:#e6e6e6;letter-spacing:0.00px">Tool Settings</span></div><div class="ptab" style="left:481.0px"><span style="color:#b4b4b4;letter-spacing:0.40px">PowerPose</span></div><div class="ptab" style="left:606.6px"><span style="color:#b4b4b4;letter-spacing:0.30px">Lights</span></div><div class="ptab" style="left:695.0px"><span style="color:#b4b4b4;letter-spacing:-0.20px">GenX</span></div><div class="ptab" style="left:776.2px"><span style="color:#b4b4b4;letter-spacing:-0.28px">LAMH2Iray Catalyzer</span></div>
<div class="abs" style="left:984.6px;top:1.2px;width:25.4px;height:24.8px;background:#1c1c1c;border-left:1.5px solid #424242"></div>
<svg class="abs" style="left:987px;top:0.5px" width="22" height="20" viewBox="0 0 22 20"><path d="M1.3 1.7L9.2 6L1.3 10.4Z" fill="#e0e0e0"/><path d="M10 6.2H19M7 10.1H19M4 14.3H19M4 18.1H19" stroke="#e4e4e4" stroke-width="1.4"/></svg>
</div>
<div class="body">
  <div class="abs" style="left:4px;top:10px;font-size:13px;line-height:16px;color:#dedede;white-space:nowrap;letter-spacing:0.36px">Active Tool :</div>
  <div class="abs" style="left:80px;top:4.5px;width:927px;height:26px;background:linear-gradient(#4a4a4a 0%,#3e3e3e 45%,#333 100%);border:1px solid #2a2a2a;border-top-color:#555;border-radius:2px"></div>
  <svg class="abs" style="left:86px;top:6px" width="24" height="22" viewBox="0 0 24 22"><path d="M2 8.5Q2 7 3.5 7H5L6 5H10L11 7H16.5Q18 7 18 8.5V18Q18 19.5 16.5 19.5H3.5Q2 19.5 2 18Z" fill="#d4d4d4"/><circle cx="8" cy="13.5" r="3.6" fill="#6a6a6a" stroke="#9a9a9a" stroke-width="0.8"/><rect x="14" y="9" width="2" height="2" fill="#555"/><path d="M16.5 1L16.5 9.5L18.6 7.6L20 10.6L21.2 10L19.8 7.2H22.4Z" fill="#333" stroke="#e8e8e8" stroke-width="0.9"/></svg>

  <div class="abs" style="left:114px;top:10px;font-size:13px;line-height:16px;color:#e2e2e2;white-space:nowrap;letter-spacing:0.28px">Spot Render</div>
  <svg class="abs" style="left:986px;top:13px" width="11" height="10" viewBox="0 0 11 10"><path d="M0.3 0.5H10.7L5.5 9.8Z" fill="#e4e4e4"/></svg>
  <div class="abs" style="left:4.5px;top:45px;width:1002.5px;height:44px;border:1px solid #4b4b4b"></div>
  <div class="abs" style="left:11.5px;top:37px;padding:0 3px;background:#3b3b3b;font-size:13px;line-height:16px;color:#dedede;white-space:nowrap;letter-spacing:0.34px">Render To :</div>
  <div class="abs" style="left:11px;top:62.5px;width:18px;height:18px;border-radius:50%;background:#2c2c2c"></div>
  <div class="abs" style="left:12.5px;top:64px;width:15px;height:15px;border-radius:50%;background:#585858"></div>
  <div class="abs" style="left:36.5px;top:62.5px;font-size:13px;line-height:16px;color:#dedede;white-space:nowrap;letter-spacing:0.75px">Viewport</div>
  <div class="abs" style="left:508.5px;top:62px;width:19px;height:19px;border-radius:50%;background:#2b2b2b"></div>
  <div class="abs" style="left:511.5px;top:65px;width:13px;height:13px;border-radius:50%;background:#f6ba2a"></div>
  <div class="abs" style="left:535.5px;top:62.5px;font-size:13px;line-height:16px;color:#dedede;white-space:nowrap;letter-spacing:0.58px">New Window</div>
</div>

</div>
</body>
</html>
